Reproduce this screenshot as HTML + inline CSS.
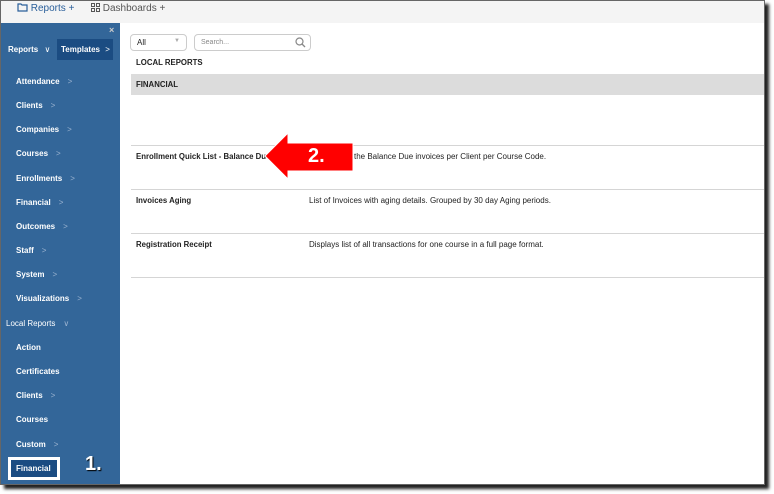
<!DOCTYPE html>
<html><head><style>
*{margin:0;padding:0;box-sizing:border-box}
body{width:774px;height:494px;background:#fff;font-family:"Liberation Sans",Arial,sans-serif;position:relative;overflow:hidden}
.frame{position:absolute;left:0;top:0;width:765px;height:485px;border:1px solid #666;box-shadow:4px 4px 3px #222;background:#fff;overflow:hidden}
.top{position:absolute;left:0;top:0;width:100%;height:22px;background:#f4f4f4}
.top span{position:absolute;top:2px;font-size:10px;color:#2a5f9a}
.side{position:absolute;left:0;top:22px;width:119px;height:463px;background:#336699}
.it{position:absolute;left:15px;font-size:8px;font-weight:bold;color:#fff;white-space:nowrap}
.chev{display:inline-block;margin-left:8px;color:#9bb3d0;font-weight:normal}
.t{position:absolute;font-size:8px;color:#222;white-space:nowrap}
.b{font-weight:bold;font-size:7.8px}
.hl{position:absolute;left:130px;width:634px;height:1px;background:#d5d5d5}
</style></head><body>
<div class="frame">
<div class="top">
<span style="left:16px"><svg width="11" height="9" viewBox="0 0 11 9" style="vertical-align:-1px"><path d="M1 1h3l1 1h5v6H1z" fill="none" stroke="#2a5f9a" stroke-width="1.2"/></svg> Reports +</span>
<span style="left:90px;color:#555"><svg width="9" height="9" viewBox="0 0 9 9" style="vertical-align:-1px"><rect x=".5" y=".5" width="3" height="3" fill="none" stroke="#555"/><rect x="5.5" y=".5" width="3" height="3" fill="none" stroke="#555"/><rect x=".5" y="5.5" width="3" height="3" fill="none" stroke="#555"/><rect x="5.5" y="5.5" width="3" height="3" fill="none" stroke="#555"/></svg> Dashboards +</span>
</div>
<div class="side">
<div class="it" style="left:108px;top:2px;color:#ccc;font-size:9px">×</div>
<div class="it" style="top:29px">Action</div>
<div style="position:absolute;left:0;top:15px;width:119px;height:22px;background:#336699"></div>
<div class="it" style="left:7px;top:22px">Reports <span style="font-weight:normal;margin-left:4px">∨</span></div>
<div style="position:absolute;left:56px;top:16px;width:56px;height:21px;background:#1b4c82"></div>
<div class="it" style="left:60px;top:22px">Templates <span style="font-weight:normal;margin-left:3px">&gt;</span></div>
<div class="it" style="top:54px">Attendance<span class="chev">&gt;</span></div>
<div class="it" style="top:78px">Clients<span class="chev">&gt;</span></div>
<div class="it" style="top:102px">Companies<span class="chev">&gt;</span></div>
<div class="it" style="top:126px">Courses<span class="chev">&gt;</span></div>
<div class="it" style="top:151px">Enrollments<span class="chev">&gt;</span></div>
<div class="it" style="top:175px">Financial<span class="chev">&gt;</span></div>
<div class="it" style="top:199px">Outcomes<span class="chev">&gt;</span></div>
<div class="it" style="top:223px">Staff<span class="chev">&gt;</span></div>
<div class="it" style="top:247px">System<span class="chev">&gt;</span></div>
<div class="it" style="top:271px">Visualizations<span class="chev">&gt;</span></div>
<div class="it" style="left:5px;top:296px;font-weight:normal">Local Reports<span class="chev">∨</span></div>
<div class="it" style="top:320px">Action</div>
<div class="it" style="top:344px">Certificates</div>
<div class="it" style="top:368px">Clients<span class="chev">&gt;</span></div>
<div class="it" style="top:392px">Courses</div>
<div class="it" style="top:417px">Custom<span class="chev">&gt;</span></div>
<div style="position:absolute;left:7px;top:434px;width:52px;height:23px;border:3px solid #fff;background:#1b4c82"></div>
<div class="it" style="top:441px">Financial</div>
<div style="position:absolute;left:84px;top:430px;font-size:20px;font-weight:bold;color:#fff;text-shadow:1px 1px 1px #000">1.</div>
</div>
<div style="position:absolute;left:129px;top:33px;width:57px;height:17px;border:1px solid #ccc;border-radius:4px;font-size:8px;padding:3px 6px;color:#222">All<span style="position:absolute;right:6px;top:3px;color:#aaa;font-size:6px">▼</span></div>
<div style="position:absolute;left:193px;top:33px;width:117px;height:17px;border:1px solid #ccc;border-radius:4px;font-size:7px;padding:4px 6px;color:#888">Search...
<svg width="11" height="11" viewBox="0 0 11 11" style="position:absolute;right:4px;top:2px"><circle cx="4.5" cy="4.5" r="3.5" fill="none" stroke="#888" stroke-width="1.2"/><path d="M7 7l3 3" stroke="#888" stroke-width="1.3"/></svg></div>
<div class="t b" style="left:135px;top:57px">LOCAL REPORTS</div>
<div style="position:absolute;left:130px;top:73px;width:634px;height:21px;background:#dcdcdc"></div>
<div class="t b" style="left:135px;top:79px">FINANCIAL</div>
<div class="hl" style="top:144px"></div>
<div class="hl" style="top:188px"></div>
<div class="hl" style="top:232px"></div>
<div class="hl" style="top:276px"></div>
<div class="t b" style="left:135px;top:151px">Enrollment Quick List - Balance Due</div>
<div class="t" style="left:308px;top:151px">Lists all</div>
<div class="t" style="left:353px;top:151px">the Balance Due invoices per Client per Course Code.</div>
<div class="t b" style="left:135px;top:195px">Invoices Aging</div>
<div class="t" style="left:308px;top:195px">List of Invoices with aging details. Grouped by 30 day Aging periods.</div>
<div class="t b" style="left:135px;top:239px">Registration Receipt</div>
<div class="t" style="left:308px;top:239px">Displays list of all transactions for one course in a full page format.</div>
<svg style="position:absolute;left:262px;top:131px" width="94" height="50"><path d="M2 24L25 1V11H90V39H25V47Z" fill="#f00" stroke="#fff" stroke-width="1"/></svg>
<div style="position:absolute;left:307px;top:144px;font-size:20px;font-weight:bold;color:#fff">2.</div>
</div>
</body></html>
